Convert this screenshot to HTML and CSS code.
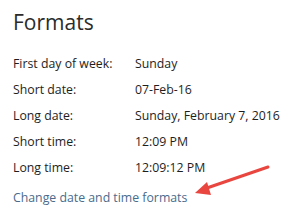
FILE: index.html
```html
<!DOCTYPE html>
<html>
<head>
<meta charset="utf-8">
<link rel="stylesheet" href="styles.css">
</head>
<body>
<div class="panel">
  <h1 class="title">Formats</h1>
  <div class="grid">
    <div class="label">First day of week:</div><div class="value">Sunday</div>
    <div class="label">Short date:</div><div class="value">07-Feb-16</div>
    <div class="label">Long date:</div><div class="value">Sunday, February 7, 2016</div>
    <div class="label">Short time:</div><div class="value">12:09 PM</div>
    <div class="label">Long time:</div><div class="value">12:09:12 PM</div>
  </div>
  <a class="link" href="#">Change date and time formats</a>
  <svg class="arrow" width="300" height="216" viewBox="0 0 300 216">
    <line x1="268" y1="167" x2="204" y2="189" stroke="#e8463f" stroke-width="3" stroke-linecap="round"/>
    <polygon points="195,193 207,182 211,195" fill="#e8463f"/>
  </svg>
</div>
</body>
</html>
```
FILE: styles.css
```css
html, body {
  margin: 0;
  padding: 0;
  background: #ffffff;
}
.panel {
  position: relative;
  width: 300px;
  height: 216px;
  padding: 9px 0 0 13px;
  box-sizing: border-box;
  font-family: "Open Sans", "Noto Sans", sans-serif;
  color: #1e1e1e;
}
.title {
  margin: 0;
  font-size: 21px;
  font-weight: 400;
  line-height: 27px;
  color: #2b2b2b;
}
.grid {
  margin-top: 20px;
  display: grid;
  grid-template-columns: 122px auto;
  grid-auto-rows: 26px;
  font-size: 12.3px;
  line-height: 16px;
}
.link {
  display: block;
  margin-top: 4px;
  font-size: 12.3px;
  line-height: 16px;
  color: #4a6b8c;
  text-decoration: none;
}
.arrow {
  position: absolute;
  left: 0;
  top: 0;
  pointer-events: none;
}
```
